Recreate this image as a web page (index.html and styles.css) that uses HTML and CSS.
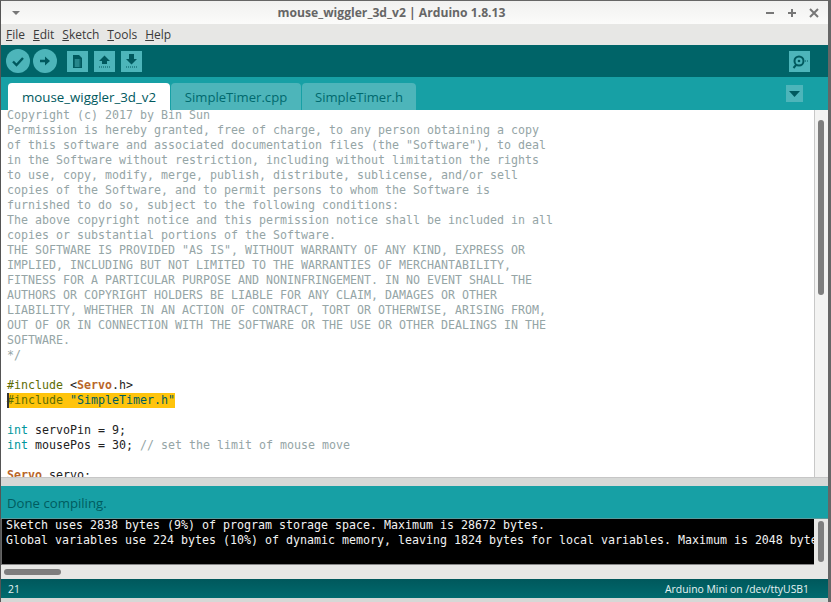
FILE: index.html
```html
<!DOCTYPE html>
<html lang="en">
<head>
<meta charset="utf-8">
<title>mouse_wiggler_3d_v2 | Arduino 1.8.13</title>
<link rel="stylesheet" href="styles.css">
</head>
<body>
<div class="window">
  <header class="titlebar">
    <svg class="wm-menu" width="10" height="6" viewBox="0 0 10 6"><path d="M1 1h8L5 5z" fill="#777"/></svg>
    <div class="title">mouse_wiggler_3d_v2 | Arduino 1.8.13</div>
    <div class="wm-buttons">
      <svg width="12" height="12" viewBox="0 0 12 12"><path d="M2 6h8" stroke="#777" stroke-width="2"/></svg>
      <svg width="12" height="12" viewBox="0 0 12 12"><path d="M2 6h8M6 2v8" stroke="#777" stroke-width="2"/></svg>
      <svg width="12" height="12" viewBox="0 0 12 12"><path d="M2 2l8 8M10 2l-8 8" stroke="#777" stroke-width="2"/></svg>
    </div>
  </header>
  <nav class="menubar">
    <span><u>F</u>ile</span><span><u>E</u>dit</span><span><u>S</u>ketch</span><span><u>T</u>ools</span><span><u>H</u>elp</span>
  </nav>
  <div class="toolbar">
    <svg class="tool round" viewBox="0 0 24 24"><path d="M7 12.500l3.500 3.500L17 9" fill="none" stroke="#00595e" stroke-width="2.400"/></svg>
    <svg class="tool round" viewBox="0 0 24 24"><path d="M7 12h7" stroke="#00595e" stroke-width="2.400"/><path d="M12 7.500l5 4.500-5 4.500z" fill="#00595e"/></svg>
    <svg class="tool square first" viewBox="0 0 21 21"><path d="M6 4h6l3 3v10H6z" fill="#00595e"/><path d="M7.500 9h6M7.500 11h6M7.500 13h6M7.500 15h6M9 8v8M11 8v8" stroke="#4db5ba" stroke-width=".6"/></svg>
    <svg class="tool square" viewBox="0 0 21 21"><path d="M10.500 4.500L16 10h-3v3H8v-3H5z" fill="#00595e"/><path d="M5 16h11" stroke="#00595e" stroke-width="1" stroke-dasharray="1 1"/></svg>
    <svg class="tool square" viewBox="0 0 21 21"><path d="M8 3h5v5h3l-5.500 5.500L5 8h3z" fill="#00595e"/><path d="M5 16h11" stroke="#00595e" stroke-width="1" stroke-dasharray="1 1"/></svg>
    <svg class="tool square monitor" viewBox="0 0 21 21"><circle cx="10" cy="10" r="4.500" fill="none" stroke="#00595e" stroke-width="2"/><circle cx="10" cy="10" r="1.300" fill="#00595e"/><path d="M7 14l-2.500 3" stroke="#00595e" stroke-width="2"/><path d="M16 10h3" stroke="#00595e" stroke-dasharray="1 1"/></svg>
  </div>
  <div class="tabbar">
    <div class="tab active">mouse_wiggler_3d_v2</div>
    <div class="tab cpp">SimpleTimer.cpp</div>
    <div class="tab hdr">SimpleTimer.h</div>
    <div class="tab-menu"><svg width="11" height="6" viewBox="0 0 11 6"><path d="M0 0h11L5.500 6z" fill="#00595e"/></svg></div>
  </div>
  <div class="editor">
    <pre class="code"><span class="c">Copyright (c) 2017 by Bin Sun
Permission is hereby granted, free of charge, to any person obtaining a copy
of this software and associated documentation files (the "Software"), to deal
in the Software without restriction, including without limitation the rights
to use, copy, modify, merge, publish, distribute, sublicense, and/or sell
copies of the Software, and to permit persons to whom the Software is
furnished to do so, subject to the following conditions:
The above copyright notice and this permission notice shall be included in all
copies or substantial portions of the Software.
THE SOFTWARE IS PROVIDED "AS IS", WITHOUT WARRANTY OF ANY KIND, EXPRESS OR
IMPLIED, INCLUDING BUT NOT LIMITED TO THE WARRANTIES OF MERCHANTABILITY,
FITNESS FOR A PARTICULAR PURPOSE AND NONINFRINGEMENT. IN NO EVENT SHALL THE
AUTHORS OR COPYRIGHT HOLDERS BE LIABLE FOR ANY CLAIM, DAMAGES OR OTHER
LIABILITY, WHETHER IN AN ACTION OF CONTRACT, TORT OR OTHERWISE, ARISING FROM,
OUT OF OR IN CONNECTION WITH THE SOFTWARE OR THE USE OR OTHER DEALINGS IN THE
SOFTWARE.
*/</span>

<span class="pp">#include</span> &lt;<b class="k">Servo</b>.h&gt;
<span class="hl"><i class="caret"></i><span class="pp">#include</span> <span class="s">"SimpleTimer.h"</span></span>

<span class="t">int</span> servoPin = 9;
<span class="t">int</span> mousePos = 30; <span class="c">// set the limit of mouse move</span>

<b class="k">Servo</b> servo;</pre>
    <div class="vscroll"><div class="vthumb"></div></div>
  </div>
  <div class="status">Done compiling.</div>
  <div class="console">
    <pre class="out">Sketch uses 2838 bytes (9%) of program storage space. Maximum is 28672 bytes.
Global variables use 224 bytes (10%) of dynamic memory, leaving 1824 bytes for local variables. Maximum is 2048 bytes.</pre>
    <div class="cscroll"><div class="cthumb"></div></div>
  </div>
  <div class="hscroll"><div class="hthumb"></div></div>
  <footer class="footer"><span>21</span><span>Arduino Mini on /dev/ttyUSB1</span></footer>
</div>
</body>
</html>
```

FILE: styles.css
```css
* { box-sizing: border-box; }
html, body { margin: 0; height: 100%; background: #d6d8d6; overflow: hidden; }
.window {
  width: 831px; height: 602px;
  display: flex; flex-direction: column;
  border-left: 1px solid #555;
  border-top: 1px solid #666;
  border-right: 3px solid #666;
  font-family: "Open Sans", "Noto Sans", sans-serif;
  overflow: hidden;
}
.titlebar {
  height: 23px; flex: none;
  display: flex; align-items: center; justify-content: space-between;
  padding: 0 8px 0 10px;
  background: linear-gradient(#f1f1f0, #fbfbfa);
}
.title { font-size: 12.150px; font-weight: 700; color: #666; margin-left: -2px; }
.wm-buttons { display: flex; gap: 10px; }
.menubar {
  height: 21px; flex: none;
  display: flex; gap: 8px; align-items: center;
  padding: 0 4px 1px 5px;
  background: #e7e7e5;
  font-size: 12px; color: #3a3a3a;
}
.toolbar {
  height: 32px; flex: none;
  display: flex; align-items: center; gap: 2px;
  padding: 0 0 0 5px;
  background: #006468;
}
.tool { display: block; width: 21px; height: 21px; background: #4db5ba; }
.round { width: 24px; height: 24px; border-radius: 50%; margin-right: 1px; }
.square { margin-right: 4px; }
.first { margin-left: 7px; }
.monitor { margin-left: auto; margin-right: 18px; }
.tabbar {
  height: 33px; flex: none;
  display: flex; align-items: flex-end; gap: 1px;
  padding: 0 0 0 7px;
  background: #17a0a5;
  font-size: 13.100px;
}
.tab {
  height: 27px; display: flex; align-items: center; justify-content: center;
  border-radius: 4px 4px 0 0;
  background: #4db5ba; color: #00696e;
}
.tab.active { width: 162px; background: #fff; color: #00595e; font-size: 13.300px; }
.cpp { width: 130px; }
.hdr { width: 114px; }
.tab-menu {
  width: 17px; height: 17px; margin: 0 25px 8px auto;
  display: flex; align-items: center; justify-content: center;
  background: #4db5ba;
}
.editor {
  height: 368px; flex: none;
  display: flex;
  background: #fff;
  border-bottom: 1px solid #c6c6c6;
  overflow: hidden;
}
.code {
  flex: 1; margin: -2px 0 0; padding: 0 0 0 6px;
  font: 11.630px/15px "DejaVu Sans Mono", monospace;
  color: #222;
  overflow: hidden;
}
.c { color: #95a5a6; }
.pp { color: #5e6d03; }
.k { font-weight: 700; color: #b9662a; }
.s { color: #005c5f; }
.t { color: #00979c; }
.hl { display: inline-block; background: #ffc40c; height: 15px; vertical-align: top; position: relative; }
.caret { position: absolute; left: 0; top: 0; width: 2px; height: 15px; background: #333; }
.vscroll { width: 14px; flex: none; padding: 10px 2px 0 3px; background: #f3f3f2; border-left: 1px solid #c8c8c8; }
.vthumb { height: 175px; border-radius: 3px; background: #7e7e7e; width: 6px; }
.status {
  height: 33px; flex: none; margin-top: 8px;
  display: flex; align-items: center;
  padding: 2px 0 0 6px;
  background: #17a0a5;
  border-bottom: 1px solid #5a9a9c;
  font-size: 13.200px; color: #005c60;
}
.console {
  height: 46px; flex: none;
  display: flex;
  background: #e7e7e5;
}
.out {
  flex: 1; min-width: 0; margin: 0; padding: 0 0 0 4px;
  font: 11.630px/15px "DejaVu Sans Mono", monospace;
  color: #f2f2f2;
  background: #000;
  border-left: 1px solid #666;
  border-bottom: 1px solid #888;
  overflow: hidden;
}
.out::before { content: ""; display: block; margin-top: -1px; }
.cscroll { width: 14px; flex: none; padding: 2px 3px 0 4px; }
.cthumb { height: 41px; width: 6px; border-radius: 3px; background: #7e7e7e; }
.hscroll { height: 14px; flex: none; background: #e7e7e5; padding: 4px 0 0 3px; }
.hthumb { width: 57px; height: 6px; border-radius: 3px; background: #7e7e7e; }
.footer {
  height: 19px; flex: none;
  display: flex; justify-content: space-between; align-items: center;
  padding: 1px 19px 0 7px;
  background: linear-gradient(#00585c, #006a6e);
  font-size: 10.400px; color: #e6f3f3;
}
```
